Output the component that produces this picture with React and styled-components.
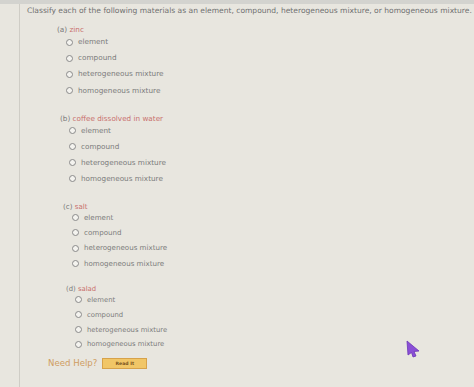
import styled, { createGlobalStyle } from 'styled-components';

const GlobalStyle = createGlobalStyle`
  html, body {
    margin: 0;
    padding: 0;
    background: #e8e6df;
  }
  body {
    font-family: 'DejaVu Sans', Verdana, sans-serif;
    overflow: hidden;
  }
`;

const Screen = styled.div`
  position: relative;
  width: 474px;
  height: 387px;
  background: #e8e6df;
  border-top: 4px solid #d3d3cf;
  box-sizing: border-box;
`;

const Panel = styled.div`
  margin-left: 19px;
  height: 100%;
  border-left: 1px solid #cfcdc6;
  padding-left: 7px;
  display: flex;
  flex-direction: column;
`;

const Question = styled.p`
  margin: 2px 0 0;
  font-size: 7.55px;
  line-height: 10px;
  color: #6f6f6f;
  white-space: nowrap;
`;

const Section = styled.div`
  display: flex;
  flex-direction: column;
  margin-top: ${(p) => p.$top}px;
  padding-left: ${(p) => p.$indent}px;
  gap: ${(p) => p.$gap}px;
  font-size: ${(p) => p.$size}px;
  line-height: 10px;
  color: #777;
`;

const Label = styled.div`
  white-space: nowrap;
  color: #7a7a7a;
`;

const Part = styled.span`
  color: #c9706e;
`;

const Option = styled.label`
  display: flex;
  align-items: center;
  gap: 5px;
  height: 10px;
  padding-left: 9px;
  margin-top: ${(p) => p.$lead || 0}px;
  white-space: nowrap;
  color: #7c7c7c;
`;

const Radio = styled.span`
  width: 5px;
  height: 5px;
  border: 1px solid #8a8a8a;
  border-radius: 50%;
  background: #f4f3ef;
  flex-shrink: 0;
`;

const HelpRow = styled.div`
  display: flex;
  align-items: center;
  gap: 5px;
  margin-top: 9px;
  padding-left: 21px;
  height: 10px;
`;

const HelpText = styled.span`
  font-size: 8.6px;
  color: #cf9d62;
  white-space: nowrap;
`;

const ReadButton = styled.button`
  width: 45px;
  height: 11px;
  padding: 0;
  border: 1px solid #d7a24a;
  background: #f1c667;
  color: #7a5320;
  font-family: 'DejaVu Sans', Verdana, sans-serif;
  font-size: 4.6px;
  font-weight: 700;
  line-height: 9px;
`;

const Cursor = styled.svg`
  position: absolute;
  left: 405px;
  top: 336px;
`;

const choices = ['element', 'compound', 'heterogeneous mixture', 'homogeneous mixture'];

const sections = [
  { part: '(a)', name: 'zinc', top: 9, indent: 30, gap: 6.2, lead: 2, size: 7.3 },
  { part: '(b)', name: 'coffee dissolved in water', top: 18, indent: 33, gap: 6, lead: 2, size: 7.25 },
  { part: '(c)', name: 'salt', top: 18, indent: 36, gap: 5.4, lead: 1, size: 7.1 },
  { part: '(d)', name: 'salad', top: 15, indent: 39, gap: 4.9, lead: 1, size: 6.85 },
];

const App = () => (
  <>
    <GlobalStyle />
    <Screen>
      <Panel>
        <Question>
          Classify each of the following materials as an element, compound, heterogeneous mixture, or homogeneous mixture.
        </Question>
        {sections.map((s) => (
          <Section key={s.part} $top={s.top} $indent={s.indent} $gap={s.gap} $size={s.size}>
            <Label>
              {s.part} <Part>{s.name}</Part>
            </Label>
            {choices.map((c, i) => (
              <Option key={c} $lead={i === 0 ? s.lead - s.gap : 0}>
                <Radio />
                {c}
              </Option>
            ))}
          </Section>
        ))}
        <HelpRow>
          <HelpText>Need Help?</HelpText>
          <ReadButton>Read It</ReadButton>
        </HelpRow>
      </Panel>
      <Cursor width="16" height="18" viewBox="0 0 16 18">
        <path d="M2 1 L14 11 L9 11.5 L11 16 L8 17 L6.5 12.5 L3 15 Z" fill="#8a4fd6" stroke="#6b35b8" strokeWidth="0.8" strokeLinejoin="round" />
      </Cursor>
    </Screen>
  </>
);

export default App;
